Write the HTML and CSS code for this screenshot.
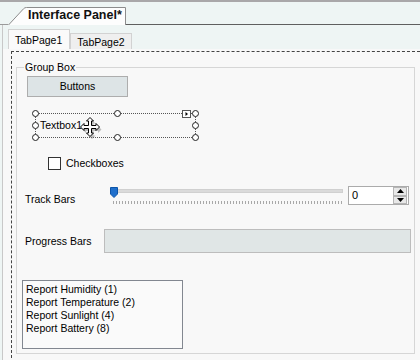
FILE: index.html
```html
<!DOCTYPE html>
<html>
<head>
<meta charset="utf-8">
<link rel="stylesheet" href="styles.css">
</head>
<body>
<div class="top">
  <div class="top-left"></div>
  <div class="doctab">
    <svg class="doctab-shape" width="118" height="18" viewBox="0 0 118 18"><path d="M0.5 18 L15.5 1.8 Q16.7 0.5 18.5 0.5 L117.5 0.5 L117.5 18" fill="#fdfdfd" stroke="#8c8c8c"/></svg>
    <span class="doctab-label">Interface Panel*</span>
  </div>
  <div class="top-fill"></div>
</div>
<div class="main">
  <div class="tabs">
    <div class="tab tab-active">TabPage1</div>
    <div class="tab">TabPage2</div>
  </div>
  <div class="page">
    <div class="design">
      <div class="group">
        <div class="group-label">Group Box</div>
        <div class="btn">Buttons</div>
        <div class="sel">
          <span class="tb-text">Textbox1</span>
          <span class="h h-tl"></span><span class="h h-tm"></span><span class="h h-tr"></span>
          <span class="h h-ml"></span><span class="h h-mr"></span>
          <span class="h h-bl"></span><span class="h h-bm"></span><span class="h h-br"></span>
          <svg class="smarttag" width="9" height="8" viewBox="0 0 9 8"><rect x="0.5" y="0.5" width="8" height="7" fill="#fff" stroke="#555"/><path d="M3.5 2 L6 4 L3.5 6 Z" fill="#000"/></svg>
          <svg class="cursor" width="23" height="24" viewBox="0 0 23 24">
            <path transform="translate(2 2.5)" d="M10 0.5 L13.5 4 L11.5 4 L11.5 8.5 L16 8.5 L16 6.5 L19.5 10 L16 13.5 L16 11.5 L11.5 11.5 L11.5 16 L13.5 16 L10 19.5 L6.5 16 L8.5 16 L8.5 11.5 L4 11.5 L4 13.5 L0.5 10 L4 6.5 L4 8.5 L8.5 8.5 L8.5 4 L6.5 4 Z" fill="#777" opacity="0.45"/>
            <path d="M10 0.5 L13.5 4 L11.5 4 L11.5 8.5 L16 8.5 L16 6.5 L19.5 10 L16 13.5 L16 11.5 L11.5 11.5 L11.5 16 L13.5 16 L10 19.5 L6.5 16 L8.5 16 L8.5 11.5 L4 11.5 L4 13.5 L0.5 10 L4 6.5 L4 8.5 L8.5 8.5 L8.5 4 L6.5 4 Z" fill="#fff" stroke="#000" stroke-width="1"/>
          </svg>
        </div>
        <div class="chk"><span class="chk-box"></span><span>Checkboxes</span></div>
        <div class="row track-row">
          <span class="row-label track-label">Track Bars</span>
          <div class="track">
            <div class="groove"></div>
            <div class="ticks"></div>
            <svg class="thumb" width="8" height="11" viewBox="0 0 8 11"><path d="M0.5 0.5 H7.5 V7 L4 10.5 L0.5 7 Z" fill="#1f6fcc" stroke="#0d55a8"/></svg>
          </div>
          <div class="num">
            <span class="num-val">0</span>
            <div class="spin">
              <div class="spin-btn"><svg width="7" height="4" viewBox="0 0 7 4"><path d="M0 4 L3.5 0 L7 4 Z" fill="#000"/></svg></div>
              <div class="spin-btn"><svg width="7" height="4" viewBox="0 0 7 4"><path d="M0 0 L3.5 4 L7 0 Z" fill="#000"/></svg></div>
            </div>
          </div>
        </div>
        <div class="row prog-row">
          <span class="row-label prog-label">Progress Bars</span>
          <div class="prog"></div>
        </div>
        <div class="list">
          <div class="item">Report Humidity (1)</div>
          <div class="item">Report Temperature (2)</div>
          <div class="item">Report Sunlight (4)</div>
          <div class="item">Report Battery (8)</div>
        </div>
      </div>
    </div>
  </div>
</div>
</body>
</html>
```

FILE: styles.css
```css
html, body {
  margin: 0;
  padding: 0;
}
body {
  width: 420px;
  height: 360px;
  overflow: hidden;
  background: #eef5f4;
  font-family: "Liberation Sans", Arial, sans-serif;
  font-size: 10.5px;
  color: #000;
}
.top {
  height: 25px;
  box-sizing: border-box;
  border-top: 2px solid #a9a7a9;
  display: flex;
  align-items: flex-end;
}
.top-left {
  width: 8px;
  height: 0;
  border-bottom: 1px solid #9a9a9a;
}
.doctab {
  position: relative;
  width: 118px;
  height: 18px;
}
.doctab-shape {
  position: absolute;
  left: 0;
  top: 0;
}
.doctab-label {
  position: relative;
  display: block;
  padding-left: 20px;
  line-height: 16px;
  font-weight: bold;
  font-size: 12.5px;
  color: #111;
}
.top-fill {
  flex: 1;
  height: 0;
  border-bottom: 1px solid #5f5f5f;
}
.main {
  margin-left: 2px;
  border-left: 1px solid #c8c8c8;
  height: 335px;
}
.tabs {
  height: 24px;
  display: flex;
  align-items: flex-end;
  padding-left: 5px;
}
.tab {
  height: 16px;
  box-sizing: border-box;
  padding: 0 6px;
  border: 1px solid #d2d2d2;
  border-bottom: none;
  background: #efefef;
  line-height: 16px;
}
.tab-active {
  height: 20px;
  line-height: 20px;
  background: #fafafa;
  padding: 0 7px 0 6px;
}
.page {
  height: 311px;
  box-sizing: border-box;
  padding: 2px 0 0 8px;
  background: #f8f8f8;
}
.design {
  height: 307px;
  box-sizing: border-box;
  border: 1px dashed #444;
  border-right: none;
  border-bottom: none;
}
.group {
  margin: 15px 0 0 4px;
  width: 399px;
  height: 287px;
  box-sizing: border-box;
  border: 1px solid #d6d6d6;
}
.group-label {
  width: fit-content;
  margin: -7px 0 0 7px;
  padding: 0 1px;
  background: #f8f8f8;
  line-height: 13px;
}
.btn {
  margin: 2px 0 0 10px;
  width: 101px;
  height: 21px;
  box-sizing: border-box;
  border: 1px solid #adadad;
  background: #dde4e6;
  text-align: center;
  line-height: 19px;
}
.sel {
  position: relative;
  margin: 16px 0 0 18px;
  width: 161px;
  height: 25px;
  box-sizing: border-box;
  border: 1px dotted #555;
}
.tb-text {
  display: block;
  padding-left: 4px;
  line-height: 23px;
}
.h {
  position: absolute;
  width: 7px;
  height: 7px;
  box-sizing: border-box;
  border: 1px solid #222;
  border-radius: 50%;
  background: #fff;
}
.h-tl { left: -4px; top: -4px; }
.h-tm { left: 78px; top: -4px; }
.h-tr { right: -4px; top: -4px; }
.h-ml { left: -4px; top: 8px; }
.h-mr { right: -4px; top: 8px; }
.h-bl { left: -4px; bottom: -4px; }
.h-bm { left: 78px; bottom: -4px; }
.h-br { right: -4px; bottom: -4px; }
.smarttag {
  position: absolute;
  left: 146px;
  top: -4px;
}
.cursor {
  position: absolute;
  left: 44px;
  top: 3px;
}
.chk {
  display: flex;
  align-items: center;
  gap: 5px;
  margin: 19px 0 0 31px;
  line-height: 13px;
}
.chk-box {
  width: 13px;
  height: 13px;
  box-sizing: border-box;
  border: 1px solid #333;
  background: #fff;
}
.row {
  display: flex;
  align-items: flex-start;
}
.row-label {
  margin-left: 8px;
  line-height: 13px;
}
.track-row {
  margin-top: 16px;
  height: 19px;
}
.track-label {
  width: 85px;
  margin-top: 7px;
}
.track {
  position: relative;
  width: 235px;
  height: 19px;
}
.groove {
  margin: 3px 2px 0 4px;
  height: 4px;
  box-sizing: border-box;
  background: #dadada;
  border: 1px solid #d0d0d0;
}
.ticks {
  margin: 8px 2px 0 3px;
  height: 3px;
  background: repeating-linear-gradient(to right, #a8a8a8 0 1px, transparent 1px 3px);
}
.thumb {
  position: absolute;
  left: 0;
  top: 1px;
}
.num {
  margin-left: 3px;
  width: 61px;
  height: 19px;
  box-sizing: border-box;
  border: 1px solid #ababab;
  background: #fff;
  display: flex;
}
.num-val {
  flex: 1;
  padding-left: 3px;
  line-height: 17px;
  font-size: 11px;
}
.spin {
  width: 14px;
  margin: 0 1px 0 0;
  display: flex;
  flex-direction: column;
}
.spin-btn {
  flex: 1;
  box-sizing: border-box;
  border: 1px solid #b5b5b5;
  background: #e8e8e8;
  display: flex;
  align-items: center;
  justify-content: center;
}
.prog-row {
  margin-top: 24px;
  height: 24px;
}
.prog-label {
  width: 79px;
  line-height: 24px;
}
.prog {
  width: 307px;
  height: 24px;
  box-sizing: border-box;
  border: 1px solid #bdbdbd;
  background: #e0e6e6;
}
.list {
  margin: 27px 0 0 5px;
  width: 161px;
  height: 69px;
  box-sizing: border-box;
  border: 1px solid #828790;
  background: #fafafa;
  padding: 2px 0 0 3px;
}
.item {
  line-height: 13px;
  white-space: nowrap;
}
```
